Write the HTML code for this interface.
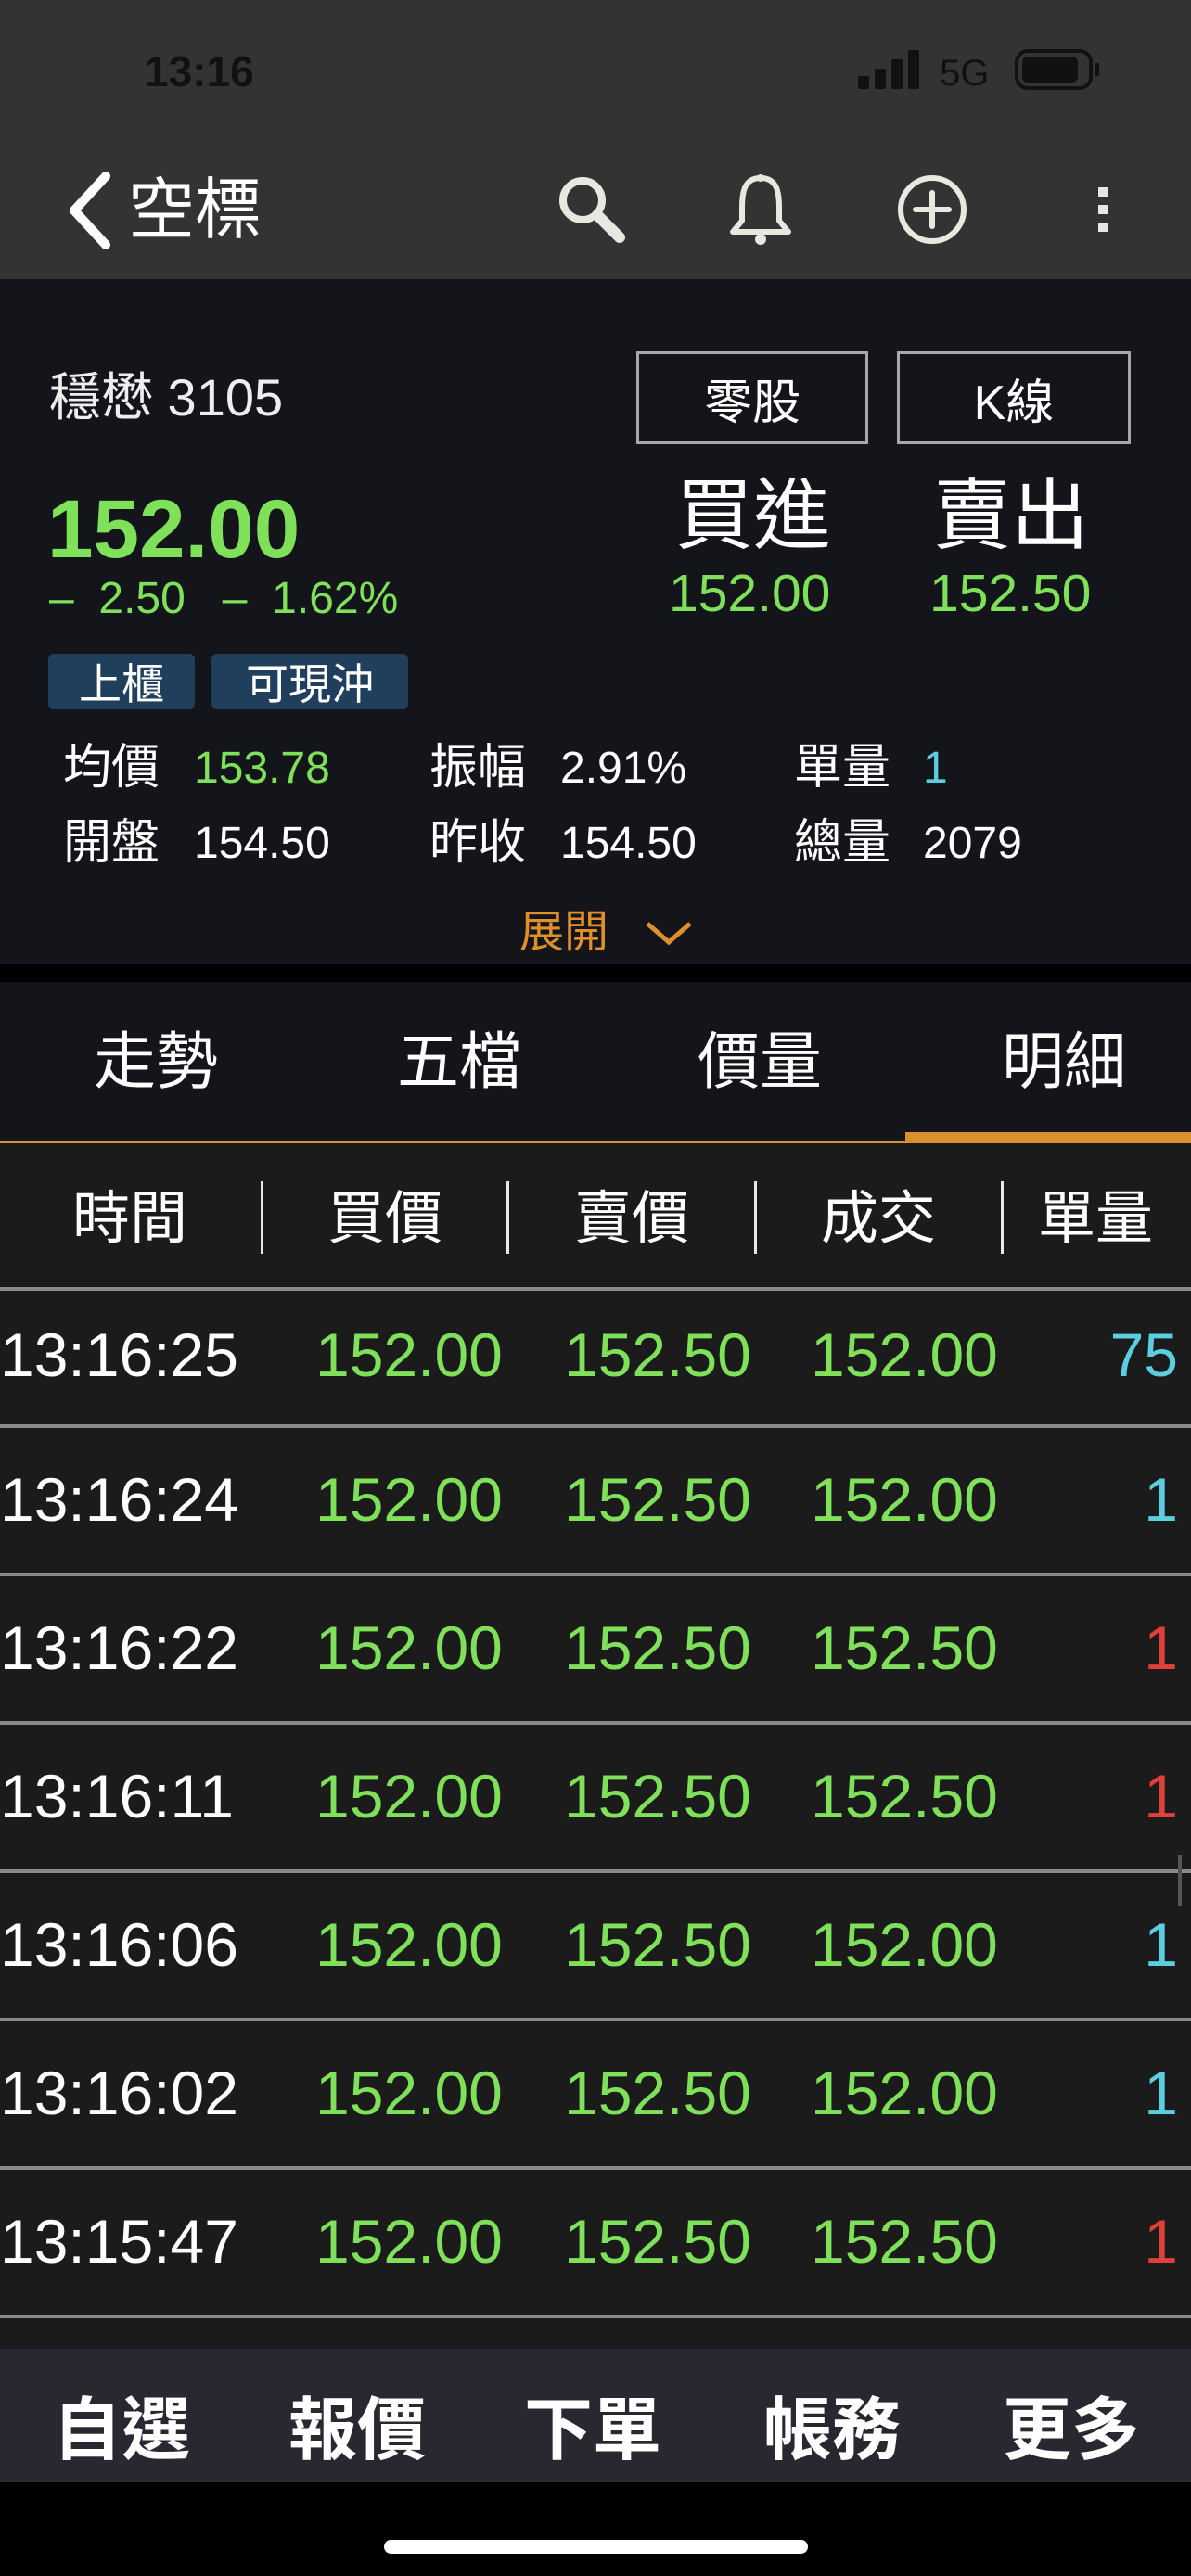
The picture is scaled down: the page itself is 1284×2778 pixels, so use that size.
<!DOCTYPE html>
<html><head><meta charset="utf-8"><style>
*{margin:0;padding:0;box-sizing:border-box}
body{width:1284px;height:2778px;background:#000;position:relative;overflow:hidden;font-family:"Liberation Sans","Noto Sans CJK TC",sans-serif;color:#fff}
div{white-space:nowrap}
.a{position:absolute}
.g{color:#7fe05a}
.c{line-height:1}
.box{position:absolute;border:3px solid #a8a8a8;font-size:52px;display:flex;align-items:center;justify-content:center}
.tag{position:absolute;background:#1f3f5c;border-radius:6px;font-size:46px;display:flex;align-items:center;justify-content:center}
.row{position:absolute;left:0;width:1284px;height:160px;background:#1b1b1b}
.sep{position:absolute;left:0;width:1284px;height:4px;background:#8a8a8a}
.num{position:absolute;font-size:66px;line-height:1;top:44px}
.r1 .num{top:36px}
.vd{position:absolute;width:3px;background:#e8e8e8;top:1274px;height:78px}
.tab{position:absolute;font-size:67px;line-height:1;top:1112px;transform:translateX(-50%)}
.hd{position:absolute;font-size:62px;line-height:1;top:1284px;transform:translateX(-50%)}
.bn{position:absolute;font-size:74px;font-weight:bold;line-height:1;top:2584px;transform:translateX(-50%)}
</style></head><body>
<div class="a" style="left:0;top:0;width:1284px;height:301px;background:#333333"></div>
<div class="a c" style="left:156px;top:54px;font-size:46px;color:#111;font-weight:bold">13:16</div>
<svg class="a" style="left:925px;top:54px" width="70" height="42"><rect x="0" y="28" width="12" height="14" rx="2" fill="#111"/><rect x="18" y="20" width="12" height="22" rx="2" fill="#111"/><rect x="36" y="10" width="12" height="32" rx="2" fill="#111"/><rect x="54" y="0" width="12" height="42" rx="2" fill="#111"/></svg>
<div class="a c" style="left:1013px;top:59px;font-size:40px;color:#111">5G</div>
<svg class="a" style="left:1094px;top:53px" width="94" height="44"><rect x="2" y="2" width="80" height="40" rx="12" fill="none" stroke="#111" stroke-width="4"/><rect x="8" y="8" width="60" height="28" rx="6" fill="#111"/><rect x="86" y="15" width="5" height="14" rx="2" fill="#111"/></svg>
<svg class="a" style="left:68px;top:184px" width="56" height="86"><path d="M46 6 L12 43 L46 80" fill="none" stroke="#fff" stroke-width="10" stroke-linecap="round" stroke-linejoin="round"/></svg>
<div class="a c" style="left:138px;top:191px;font-size:72px">空標</div>
<svg class="a" style="left:600px;top:188px" width="76" height="76"><circle cx="28" cy="28" r="21" fill="none" stroke="#e8e8e0" stroke-width="8"/><path d="M44 44 L68 68" stroke="#e8e8e0" stroke-width="12" stroke-linecap="round"/></svg>
<svg class="a" style="left:784px;top:186px" width="72" height="80"><path d="M36 6 C18 6 16 22 16 38 L16 52 L6 64 L66 64 L56 52 L56 38 C56 22 54 6 36 6 Z" fill="none" stroke="#e8e8e0" stroke-width="6" stroke-linejoin="round"/><circle cx="36" cy="72" r="6" fill="#e8e8e0"/><circle cx="36" cy="6" r="4" fill="#e8e8e0"/></svg>
<svg class="a" style="left:966px;top:188px" width="78" height="76"><circle cx="39" cy="38" r="34" fill="none" stroke="#e8e8e0" stroke-width="6"/><path d="M39 20 V56 M21 38 H57" stroke="#e8e8e0" stroke-width="6" stroke-linecap="round"/></svg>
<svg class="a" style="left:1182px;top:202px" width="16" height="48"><rect x="2" y="0" width="11" height="10" fill="#e8e8e0"/><rect x="2" y="19" width="11" height="10" fill="#e8e8e0"/><rect x="2" y="38" width="11" height="10" fill="#e8e8e0"/></svg>
<div class="a" style="left:0;top:301px;width:1284px;height:739px;background:#14151a"></div>
<div class="a c" style="left:53px;top:401px;font-size:56px;color:#eee">穩懋 3105</div>
<div class="box" style="left:686px;top:379px;width:250px;height:100px">零股</div>
<div class="box" style="left:967px;top:379px;width:252px;height:100px">K線</div>
<div class="a c g" style="left:51px;top:526px;font-size:89px;font-weight:bold">152.00</div>
<div class="a c g" style="left:53px;top:622px;font-size:48px">–&nbsp; 2.50&nbsp;&nbsp; –&nbsp; 1.62%</div>
<div class="a c" style="left:728px;top:514px;font-size:84px">買進</div>
<div class="a c" style="left:1006px;top:514px;font-size:84px">賣出</div>
<div class="a c g" style="left:721px;top:612px;font-size:57px">152.00</div>
<div class="a c g" style="left:1002px;top:612px;font-size:57px">152.50</div>
<div class="tag" style="left:52px;top:705px;width:158px;height:60px">上櫃</div>
<div class="tag" style="left:228px;top:705px;width:212px;height:60px">可現沖</div>
<div class="a c" style="left:68px;top:802px;font-size:52px">均價</div>
<div class="a c g" style="left:209px;top:805px;font-size:48px">153.78</div>
<div class="a c" style="left:463px;top:802px;font-size:52px">振幅</div>
<div class="a c" style="left:604px;top:805px;font-size:48px">2.91%</div>
<div class="a c" style="left:856px;top:802px;font-size:52px">單量</div>
<div class="a c" style="left:995px;top:805px;font-size:48px;color:#5bcfe0">1</div>
<div class="a c" style="left:68px;top:883px;font-size:52px">開盤</div>
<div class="a c" style="left:209px;top:886px;font-size:48px">154.50</div>
<div class="a c" style="left:463px;top:883px;font-size:52px">昨收</div>
<div class="a c" style="left:604px;top:886px;font-size:48px">154.50</div>
<div class="a c" style="left:856px;top:883px;font-size:52px">總量</div>
<div class="a c" style="left:995px;top:886px;font-size:48px">2079</div>
<div class="a c" style="left:560px;top:982px;font-size:48px;color:#e0902a">展開</div>
<svg class="a" style="left:694px;top:992px" width="54" height="30"><path d="M4 4 L27 24 L50 4" fill="none" stroke="#e0902a" stroke-width="5"/></svg>
<div class="a" style="left:0;top:1059px;width:1284px;height:172px;background:#14151a"></div>
<div class="tab" style="left:168px">走勢</div>
<div class="tab" style="left:495px">五檔</div>
<div class="tab" style="left:819px">價量</div>
<div class="tab" style="left:1147px">明細</div>
<div class="a" style="left:0;top:1230px;width:1284px;height:3px;background:#d89030"></div>
<div class="a" style="left:976px;top:1221px;width:308px;height:12px;background:#d89030"></div>
<div class="a" style="left:0;top:1233px;width:1284px;height:157px;background:#1b1b1b"></div>
<div class="hd" style="left:140px">時間</div>
<div class="hd" style="left:415px">買價</div>
<div class="hd" style="left:681px">賣價</div>
<div class="hd" style="left:947px">成交</div>
<div class="hd" style="left:1181px">單量</div>
<div class="vd" style="left:281px"></div>
<div class="vd" style="left:546px"></div>
<div class="vd" style="left:813px"></div>
<div class="vd" style="left:1079px"></div>
<div class="sep" style="top:1388px"></div>
<div class="row r1" style="top:1392px"><div class="num" style="left:0">13:16:25</div><div class="num g" style="left:340px">152.00</div><div class="num g" style="left:608px">152.50</div><div class="num g" style="left:874px">152.00</div><div class="num" style="right:14px;color:#5bcfe0">75</div></div>
<div class="sep" style="top:1536px"></div>
<div class="row" style="top:1540px;height:156px"><div class="num" style="left:0">13:16:24</div><div class="num g" style="left:340px">152.00</div><div class="num g" style="left:608px">152.50</div><div class="num g" style="left:874px">152.00</div><div class="num" style="right:14px;color:#5bcfe0">1</div></div>
<div class="sep" style="top:1696px"></div>
<div class="row" style="top:1700px;height:156px"><div class="num" style="left:0">13:16:22</div><div class="num g" style="left:340px">152.00</div><div class="num g" style="left:608px">152.50</div><div class="num g" style="left:874px">152.50</div><div class="num" style="right:14px;color:#e0403a">1</div></div>
<div class="sep" style="top:1856px"></div>
<div class="row" style="top:1860px;height:156px"><div class="num" style="left:0">13:16:11</div><div class="num g" style="left:340px">152.00</div><div class="num g" style="left:608px">152.50</div><div class="num g" style="left:874px">152.50</div><div class="num" style="right:14px;color:#e0403a">1</div></div>
<div class="sep" style="top:2016px"></div>
<div class="row" style="top:2020px;height:156px"><div class="num" style="left:0">13:16:06</div><div class="num g" style="left:340px">152.00</div><div class="num g" style="left:608px">152.50</div><div class="num g" style="left:874px">152.00</div><div class="num" style="right:14px;color:#5bcfe0">1</div></div>
<div class="sep" style="top:2176px"></div>
<div class="row" style="top:2180px;height:156px"><div class="num" style="left:0">13:16:02</div><div class="num g" style="left:340px">152.00</div><div class="num g" style="left:608px">152.50</div><div class="num g" style="left:874px">152.00</div><div class="num" style="right:14px;color:#5bcfe0">1</div></div>
<div class="sep" style="top:2336px"></div>
<div class="row" style="top:2340px;height:156px"><div class="num" style="left:0">13:15:47</div><div class="num g" style="left:340px">152.00</div><div class="num g" style="left:608px">152.50</div><div class="num g" style="left:874px">152.50</div><div class="num" style="right:14px;color:#e0403a">1</div></div>
<div class="sep" style="top:2496px"></div>
<div class="row" style="top:2500px;height:33px"></div>
<div class="a" style="left:1270px;top:2000px;width:4px;height:56px;background:#555"></div>
<div class="a" style="left:0;top:2533px;width:1284px;height:144px;background:#272830"></div>
<div class="bn" style="left:131px">自選</div>
<div class="bn" style="left:385px">報價</div>
<div class="bn" style="left:639px">下單</div>
<div class="bn" style="left:897px">帳務</div>
<div class="bn" style="left:1155px">更多</div>
<div class="a" style="left:414px;top:2739px;width:457px;height:15px;border-radius:8px;background:#fff"></div>
</body></html>
